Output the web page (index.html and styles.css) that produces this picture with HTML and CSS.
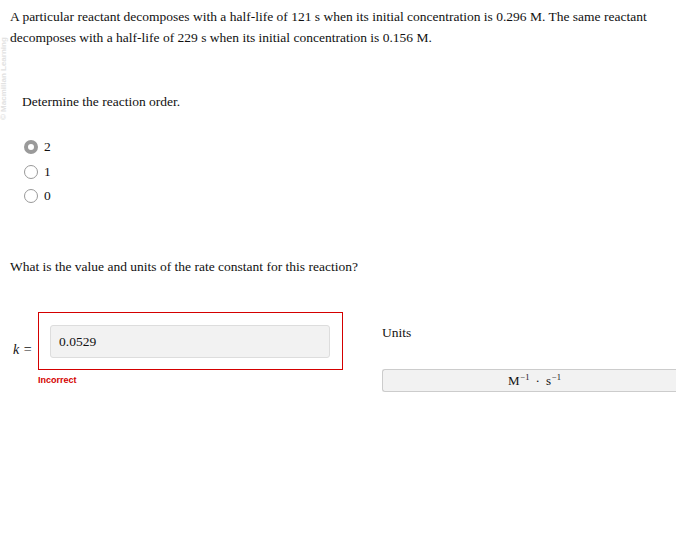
FILE: index.html
```html
<!DOCTYPE html>
<html>
<head>
<meta charset="utf-8">
<link rel="stylesheet" href="styles.css">
</head>
<body>
<div class="watermark">© Macmillan Learning</div>
<div class="page">
  <p class="intro">A particular reactant decomposes with a half-life of 121 s when its initial concentration is 0.296 M. The same reactant decomposes with a half-life of 229 s when its initial concentration is 0.156 M.</p>
  <div class="part1">
    <p class="q1">Determine the reaction order.</p>
    <ul class="options">
      <li><span class="radio checked"></span><span>2</span></li>
      <li><span class="radio"></span><span>1</span></li>
      <li><span class="radio"></span><span>0</span></li>
    </ul>
  </div>
  <p class="q2">What is the value and units of the rate constant for this reaction?</p>
  <div class="answer">
    <div class="kcol">
      <span class="klabel"><i>k</i> =</span>
      <div class="field">
        <div class="redbox"><div class="input">0.0529</div></div>
        <div class="incorrect">Incorrect</div>
      </div>
    </div>
    <div class="ucol">
      <div class="ulabel">Units</div>
      <div class="units">M<sup>−1</sup><span class="dot">·</span>s<sup>−1</sup></div>
    </div>
  </div>
</div>
</body>
</html>
```
FILE: styles.css
```css
html, body { margin: 0; padding: 0; background: #fff; }
body { font-family: "Liberation Serif", "Times New Roman", serif; font-size: 13.5px; color: #111; position: relative; }
.watermark {
  position: absolute; left: -52px; top: 60px; width: 112px; height: 8px;
  transform: rotate(-90deg); font-family: "Liberation Sans", sans-serif;
  font-size: 8px; line-height: 8px; color: #e2e2e2; white-space: nowrap; font-weight: bold;
}
.page { padding: 0 0 0 10px; }
p { margin: 0; }
.intro { line-height: 21px; padding-top: 6px; width: 660px; }
.part1 { padding-left: 12px; }
.q1 { margin-top: 46px; line-height: 16px; }
.options { list-style: none; margin: 25px 0 0 2px; padding: 0; }
.options li { display: flex; align-items: center; gap: 6px; height: 24.5px; }
.radio { width: 12px; height: 12px; border: 1px solid #999; border-radius: 50%; box-sizing: content-box; background: #fff; }
.radio.checked { width: 6px; height: 6px; border: 4px solid #9a9a9a; }
.q2 { margin-top: 50px; line-height: 16px; }
.answer { display: flex; margin-top: 37px; }
.kcol { display: flex; align-items: flex-start; width: 372px; }
.klabel { width: 25px; margin-top: 30px; padding-left: 3px; font-size: 14px; word-spacing: 1px; }
.field { width: 305px; }
.redbox { border: 1px solid #d40000; height: 58px; padding: 12px 12px 0 11px; box-sizing: border-box; }
.input { height: 33px; background: #f2f2f2; border: 1px solid #ddd; border-radius: 3px; box-sizing: border-box; padding: 8px 8px; line-height: 15px; }
.incorrect { color: #d40000; font-family: "Liberation Sans", sans-serif; font-size: 9px; font-weight: bold; margin-top: 5px; }
.ucol { flex: 1; padding-top: 14px; }
.ulabel { line-height: 14px; }
.units { margin-top: 29px; height: 23px; background: #f2f2f2; border: 1px solid #ccc; border-right: none; border-radius: 3px 0 0 3px; box-sizing: border-box; text-align: center; line-height: 21px; font-size: 13px; padding-left: 10px; }
.units sup { font-size: 8.5px; vertical-align: 5px; line-height: 0; margin-left: 1px; }
.dot { margin: 0 6px; }
```
